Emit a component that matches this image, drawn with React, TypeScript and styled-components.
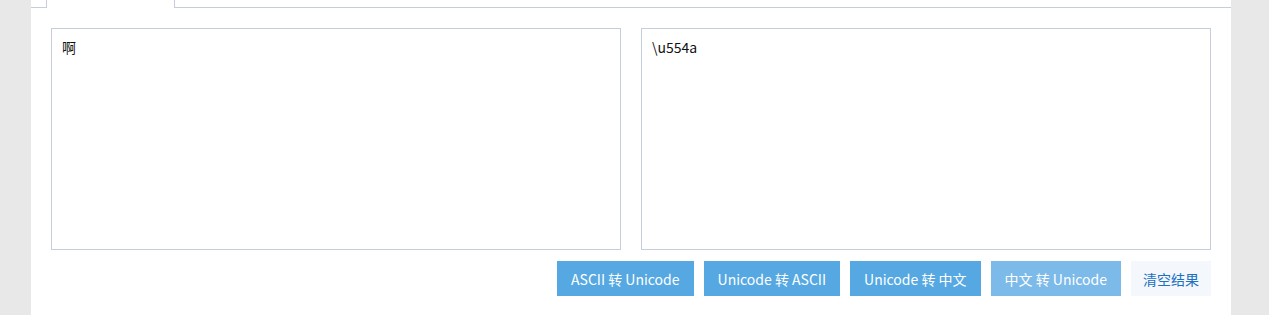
import React, { useState } from 'react';
import styled, { createGlobalStyle, css } from 'styled-components';

const GlobalStyle = createGlobalStyle`
  html, body {
    margin: 0;
    padding: 0;
    background: #e8e8e8;
    font-family: "Noto Sans CJK SC", "Noto Sans", sans-serif;
  }
`;

const Panel = styled.div`
  width: 1200px;
  margin-left: 31px;
  min-height: 315px;
  background: #fff;
  box-sizing: border-box;
`;

const TabBar = styled.div`
  display: flex;
  height: 8px;
  padding-left: 15px;
  border-bottom: 1px solid #c6cedb;
  box-sizing: border-box;
`;

const Tab = styled.div`
  width: 129px;
  height: 8px;
  margin-bottom: -1px;
  box-sizing: border-box;
  border-left: 1px solid #c6cedb;
  border-right: 1px solid #c6cedb;
  background: #fff;
`;

const Body = styled.div`
  padding: 20px 20px 0;
`;

const Editors = styled.div`
  display: grid;
  grid-template-columns: 570px 570px;
  column-gap: 20px;
`;

const Editor = styled.textarea`
  display: block;
  width: 570px;
  height: 222px;
  box-sizing: border-box;
  margin: 0;
  padding: 8px 10px;
  border: 1px solid #c6cedb;
  outline: none;
  resize: none;
  font-family: "Noto Sans CJK SC", "Noto Sans", sans-serif;
  font-size: 14px;
  line-height: 20px;
  color: #111;
`;

const Actions = styled.div`
  display: flex;
  justify-content: flex-end;
  gap: 10px;
  margin-top: 11px;
`;

const Button = styled.button<{ variant?: 'primary' | 'muted' | 'plain' }>`
  height: 35px;
  padding: 0 14px;
  border: none;
  font-family: "Noto Sans CJK SC", "Noto Sans", sans-serif;
  font-size: 14px;
  cursor: pointer;
  color: #fff;
  background: #55a8e2;
  ${({ variant }) =>
    variant === 'muted' &&
    css`
      background: #7bbae9;
    `}
  ${({ variant }) =>
    variant === 'plain' &&
    css`
      background: #f4f8fc;
      color: #2270c2;
      padding: 0 12px;
    `}
`;

export default function App() {
  const [input, setInput] = useState('啊');
  const [output, setOutput] = useState('\\u554a');

  return (
    <>
      <GlobalStyle />
      <Panel>
        <TabBar>
          <Tab />
        </TabBar>
        <Body>
          <Editors>
            <Editor value={input} onChange={(e) => setInput(e.target.value)} />
            <Editor value={output} onChange={(e) => setOutput(e.target.value)} />
          </Editors>
          <Actions>
            <Button>ASCII 转 Unicode</Button>
            <Button>Unicode 转 ASCII</Button>
            <Button>Unicode 转 中文</Button>
            <Button variant="muted">中文 转 Unicode</Button>
            <Button variant="plain" onClick={() => setOutput('')}>清空结果</Button>
          </Actions>
        </Body>
      </Panel>
    </>
  );
}
